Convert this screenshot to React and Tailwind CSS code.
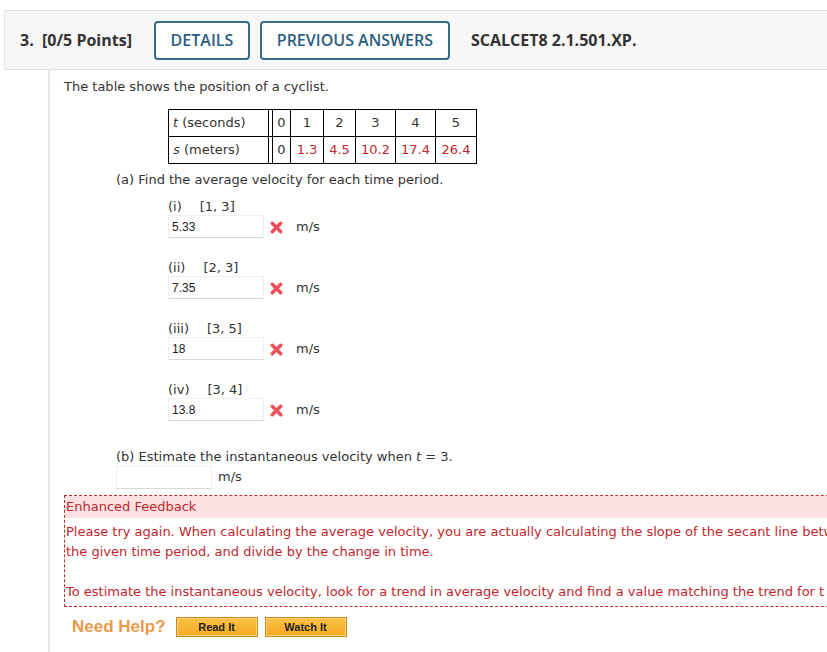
import React from "react";

const verdana = { fontFamily: "'DejaVu Sans', Verdana, sans-serif" };
const arial = { fontFamily: "'Liberation Sans', Arial, sans-serif" };

const XMark = () => (
  <svg width="15" height="15" viewBox="0 0 16 16" className="shrink-0">
    <path d="M3.5 3.5 L12.5 12.5 M12.5 3.5 L3.5 12.5" stroke="#ec5058" strokeWidth="3.8" strokeLinecap="round" />
  </svg>
);

const Answer = ({ label, range, value }) => (
  <div className="mb-[22px] ml-[104px]">
    <div className="h-[16px] leading-[16px] text-[#333]">
      {label}
      <span className="ml-[18px]">{range}</span>
    </div>
    <div className="flex items-center">
      <div
        className="w-[96px] h-[23px] px-[3px] flex items-center text-[12px] text-[#222] bg-white border border-[#f0f0f0] border-b-[#d8d8d8]"
        style={arial}
      >
        {value}
      </div>
      <span className="ml-[5px] mt-[2px]"><XMark /></span>
      <span className="ml-[12px] text-[#333]">m/s</span>
    </div>
  </div>
);

export default function App() {
  const times = ["0", "1", "2", "3", "4", "5"];
  const dist = ["0", "1.3", "4.5", "10.2", "17.4", "26.4"];
  const widths = ["w-[18px]", "w-[33px]", "w-[32px]", "w-[40px]", "w-[40px]", "w-[41px]"];

  return (
    <div className="w-[827px] h-[652px] overflow-hidden bg-white relative">
      <div className="pt-[10px] pl-[4px]">
        <div
          className="w-[900px] h-[60px] flex items-center bg-[#f7f7f7] border border-[#e2e2e2]"
          style={{ fontFamily: "'Open Sans', sans-serif" }}
        >
          <span className="ml-[15px] text-[16px] font-bold text-[#333]">3.&nbsp; [0/5 Points]</span>
          <button className="ml-[22px] w-[96px] h-[39px] rounded-[4px] border-2 border-[#3a6a8c] bg-white text-[16px] font-semibold text-[#2c5d80]">
            DETAILS
          </button>
          <button className="ml-[10px] w-[190px] h-[39px] rounded-[4px] border-2 border-[#3a6a8c] bg-white text-[16px] font-semibold text-[#2c5d80]">
            PREVIOUS ANSWERS
          </button>
          <span className="ml-[21px] text-[16px] font-bold text-[#333]">SCALCET8 2.1.501.XP.</span>
        </div>
      </div>

      <div className="ml-[48px] border-l-2 border-[#e4e4e4] pl-[14px] pb-[20px] text-[13px] text-[#333]" style={verdana}>
        <div className="pt-[8px] h-[34px] leading-[18px]">The table shows the position of a cyclist.</div>

        <table className="ml-[104px] mt-[5px] border-collapse text-[13px]">
          <tbody>
            <tr className="h-[27px]">
              <td className="w-[100px] border border-black pl-[4px] text-left">
                <i>t</i> (seconds)
              </td>
              <td className="w-[4px] border-y border-black"></td>
              {times.map((t, i) => (
                <td key={i} className={`${widths[i]} border border-black text-center`}>{t}</td>
              ))}
            </tr>
            <tr className="h-[27px]">
              <td className="border border-black pl-[4px] text-left">
                <i>s</i> (meters)
              </td>
              <td className="border-y border-black"></td>
              {dist.map((d, i) => (
                <td key={i} className={`border border-black text-center ${i === 0 ? "text-[#333]" : "text-[#c1272d]"}`}>{d}</td>
              ))}
            </tr>
          </tbody>
        </table>

        <div className="ml-[52px] mt-[7px] mb-[10px] leading-[18px]">(a) Find the average velocity for each time period.</div>

        <Answer label="(i)" range="[1, 3]" value="5.33" />
        <Answer label="(ii)" range="[2, 3]" value="7.35" />
        <Answer label="(iii)" range="[3, 5]" value="18" />
        <Answer label="(iv)" range="[3, 4]" value="13.8" />

        <div className="ml-[52px] mt-[27px] leading-[18px]">
          (b) Estimate the instantaneous velocity when <i>t</i> = 3.
        </div>
        <div className="ml-[52px] flex items-center">
          <div className="w-[96px] h-[23px] bg-white border border-[#f0f0f0] border-b-[#d8d8d8]"></div>
          <span className="ml-[6px] -mt-[2px]">m/s</span>
        </div>

        <div className="mt-[6px] w-[900px] border border-dashed border-[#c1272d] text-[#c1272d]">
          <div className="h-[22px] leading-[22px] bg-[#fde0e1] pl-[1px]">Enhanced Feedback</div>
          <div className="pl-[1px] pt-[4px] pb-[4px] leading-[20px] whitespace-nowrap">
            <div>Please try again. When calculating the average velocity, you are actually calculating the slope of the secant line between the points of</div>
            <div>the given time period, and divide by the change in time.</div>
            <div className="h-[20px]"></div>
            <div>To estimate the instantaneous velocity, look for a trend in average velocity and find a value matching the trend for t = 3.</div>
          </div>
        </div>

        <div className="mt-[7px] ml-[8px] flex items-center" style={arial}>
          <span className="text-[17px] font-bold text-[#ea9a4a]">Need Help?</span>
          <button className="ml-[10px] w-[82px] h-[20px] border border-[#cf8a1e] bg-[linear-gradient(#fcc247,#f7a823)] shadow-[inset_0_0_0_1px_#fdd27a] text-[11px] font-bold text-[#222]">
            Read It
          </button>
          <button className="ml-[7px] w-[82px] h-[20px] border border-[#cf8a1e] bg-[linear-gradient(#fcc247,#f7a823)] shadow-[inset_0_0_0_1px_#fdd27a] text-[11px] font-bold text-[#222]">
            Watch It
          </button>
        </div>
      </div>
    </div>
  );
}
